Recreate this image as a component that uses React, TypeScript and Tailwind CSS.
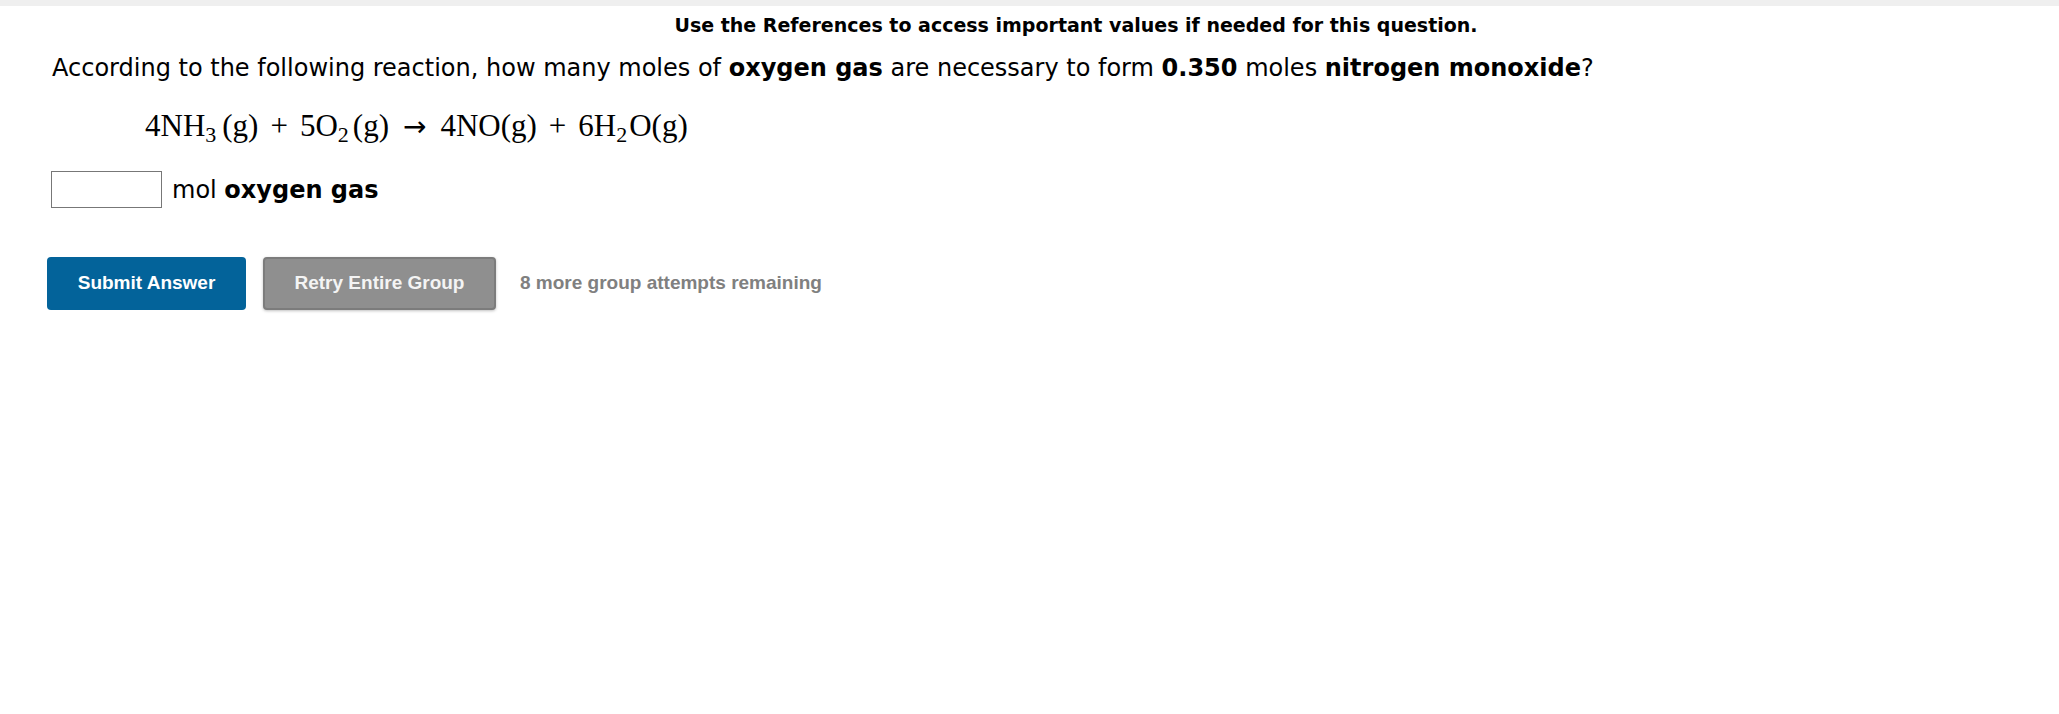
import React from "react";

function Sub({ children }: { children: React.ReactNode }) {
  return <span className="align-[-6px] text-[22px] leading-none">{children}</span>;
}

export default function App() {
  return (
    <div className="min-h-[714px] w-full bg-white text-black">
      <div className="h-[6px] bg-[#efefef]" />
      <div className="pl-[93px] pt-[8px] text-center font-['DejaVu_Sans',sans-serif] text-[19px] font-bold leading-[22px]">
        Use the References to access important values if needed for this question.
      </div>
      <div className="pl-[52px] pt-[17px] font-['DejaVu_Sans',sans-serif] text-[24px] leading-[30px]">
        According to the following reaction, how many moles of <b>oxygen gas</b> are necessary to form <b>0.350</b> moles <b>nitrogen monoxide</b>?
      </div>
      <div className="h-[63px] whitespace-nowrap pl-[145px] pt-[23px] font-['Liberation_Serif',serif] text-[31px] leading-[40px]">
        <span>4NH</span>
        <Sub>3</Sub>
        <span className="ml-[6px]">(g)</span>
        <span className="mx-[12px]">+</span>
        <span>5O</span>
        <Sub>2</Sub>
        <span className="ml-[4px]">(g)</span>
        <span className="mx-[14px] inline-block font-['DejaVu_Sans',sans-serif] text-[28px]">→</span>
        <span>4NO(g)</span>
        <span className="mx-[12px]">+</span>
        <span>6H</span>
        <Sub>2</Sub>
        <span className="ml-[2px]">O(g)</span>
      </div>
      <div className="mt-[25px] flex items-center pl-[51px]">
        <input
          type="text"
          className="h-[37px] w-[111px] border border-[#777] bg-white outline-none"
        />
        <span className="ml-[10px] font-['DejaVu_Sans',sans-serif] text-[24px]">
          mol <b>oxygen gas</b>
        </span>
      </div>
      <div className="mt-[49px] flex items-center pl-[47px] font-['Liberation_Sans',Arial,sans-serif] text-[19px] font-bold">
        <button className="h-[53px] w-[199px] rounded-[4px] bg-[#03639a] text-white">
          Submit Answer
        </button>
        <button className="ml-[17px] h-[53px] w-[233px] rounded-[4px] border-2 border-[#7c7c7c] bg-[#8f8f8f] text-[#f4f4f4] shadow-[0_1px_3px_rgba(0,0,0,0.25)]">
          Retry Entire Group
        </button>
        <span className="ml-[24px] text-[#808080]">8 more group attempts remaining</span>
      </div>
    </div>
  );
}
